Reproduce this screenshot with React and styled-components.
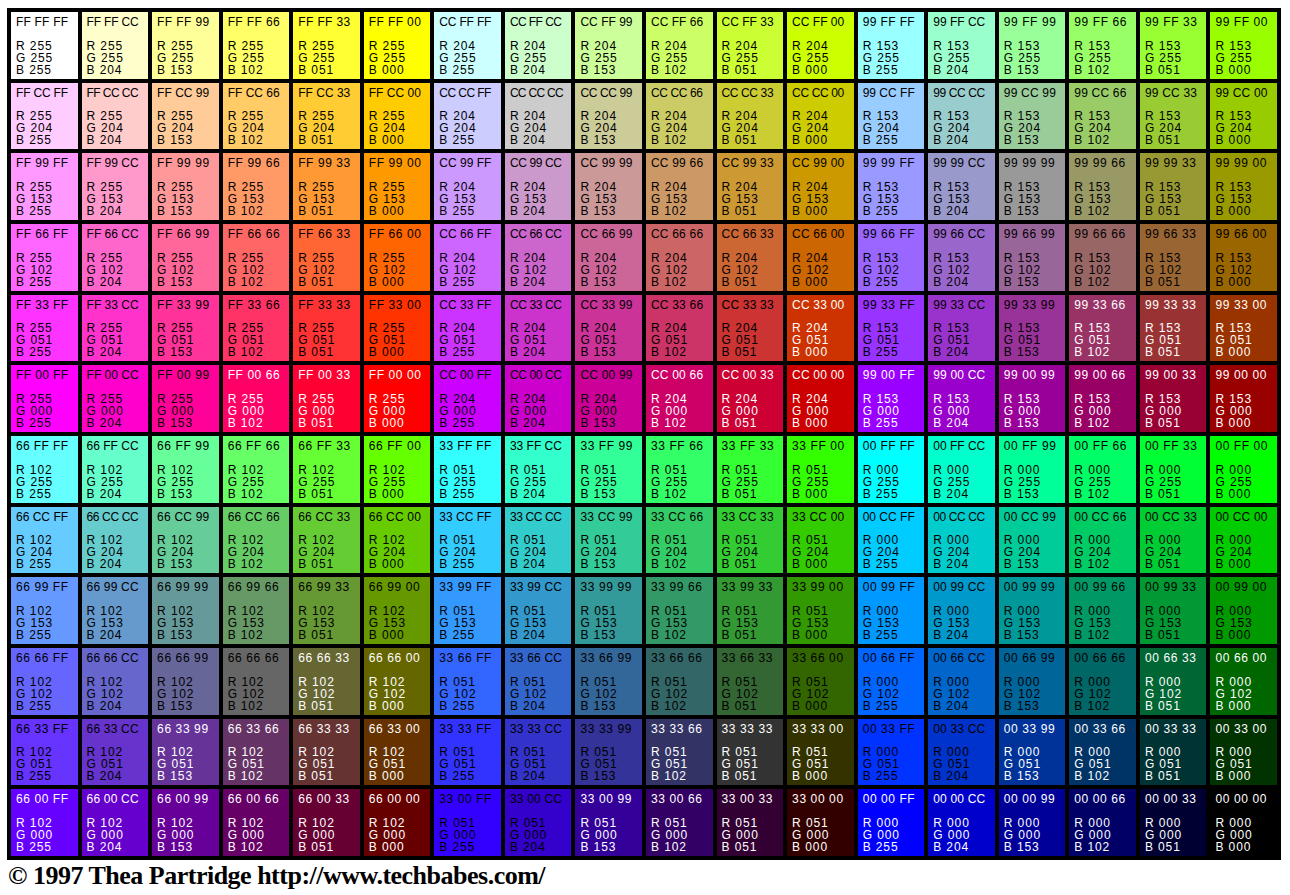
import styled, { createGlobalStyle } from "styled-components";

const GlobalStyle = createGlobalStyle`
  html, body {
    margin: 0;
    background: #fff;
  }
`;

// row order of the chart, column order is the same list for blue
const STEPS = ["FF", "CC", "99", "66", "33", "00"];

// swatches where the original chart switches to white lettering
const WHITE_TEXT = `FF0066 FF0033 FF0000 CC3300 CC0066 CC0033 CC0000
  993366 993333 993300 9900FF 9900CC 990099 990066 990033 990000
  666633 666600 663399 663366 663333 663300
  6600FF 6600CC 660099 660066 660033 660000
  333366 333333 333300 330099 330066 330033 330000
  006633 006600 003399 003366 003333 003300
  0000FF 0000CC 000099 000066 000033 000000`.split(/\s+/);

const pad = (hex) => String(parseInt(hex, 16)).padStart(3, "0");

// squeeze the label so every swatch gets about the same label width,
// C and F are wider than the digits in this font
function labelSpacing(hex) {
  const glyphs = hex.split("").reduce((sum, ch) => {
    if (ch === "C") return sum + 8.67;
    if (ch === "F") return sum + 7.33;
    return sum + 6.67;
  }, 0);
  const natural = glyphs + 2 * 3.33;
  return Math.max(-0.7, Math.min(0.6, (52 - natural) / 7));
}

function buildRows() {
  const rows = [];
  [STEPS.slice(0, 3), STEPS.slice(3)].forEach((reds) => {
    STEPS.forEach((g) => {
      reds.forEach((r) => {
        STEPS.forEach((b) => rows.push({ r, g, b }));
      });
    });
  });
  return rows;
}

function Swatch({ r, g, b }) {
  const hex = r + g + b;
  return (
    <Cell $bg={"#" + hex} $light={WHITE_TEXT.includes(hex)}>
      <HexLabel $spacing={labelSpacing(hex)}>
        {r} {g} {b}
      </HexLabel>
      <Values>
        <div>R {pad(r)}</div>
        <div>G {pad(g)}</div>
        <div>B {pad(b)}</div>
      </Values>
    </Cell>
  );
}

export default function App() {
  return (
    <>
      <GlobalStyle />
      <Page>
        <Chart>
          {buildRows().map((c) => (
            <Swatch key={c.r + c.g + c.b} {...c} />
          ))}
        </Chart>
        <Credit>© 1997 Thea Partridge http://www.techbabes.com/</Credit>
      </Page>
    </>
  );
}

const Page = styled.div`
  width: 1290px;
  height: 895px;
  padding: 8px 0 0 7px;
  box-sizing: border-box;
  overflow: hidden;
`;

const Chart = styled.div`
  width: 1274px;
  height: 852px;
  box-sizing: border-box;
  padding: 4px;
  display: grid;
  grid-template-columns: repeat(18, 1fr);
  grid-template-rows: repeat(12, 1fr);
  gap: 4px;
  background: #000;
`;

const Cell = styled.div`
  display: flex;
  flex-direction: column;
  justify-content: space-between;
  padding: 4px 0 3px 5px;
  min-width: 0;
  overflow: hidden;
  background: ${(p) => p.$bg};
  color: ${(p) => (p.$light ? "#fff" : "#000")};
  font-family: "Liberation Sans", Arial, sans-serif;
  font-size: 12px;
  line-height: 12px;
  white-space: nowrap;
`;

const HexLabel = styled.div`
  letter-spacing: ${(p) => p.$spacing}px;
`;

const Values = styled.div`
  letter-spacing: 0.9px;
`;

const Credit = styled.div`
  margin: 2px 0 0 1px;
  font-family: "Liberation Serif", "Times New Roman", serif;
  font-weight: 700;
  font-size: 26px;
  line-height: 28px;
  letter-spacing: -0.5px;
  color: #000;
  white-space: nowrap;
`;
